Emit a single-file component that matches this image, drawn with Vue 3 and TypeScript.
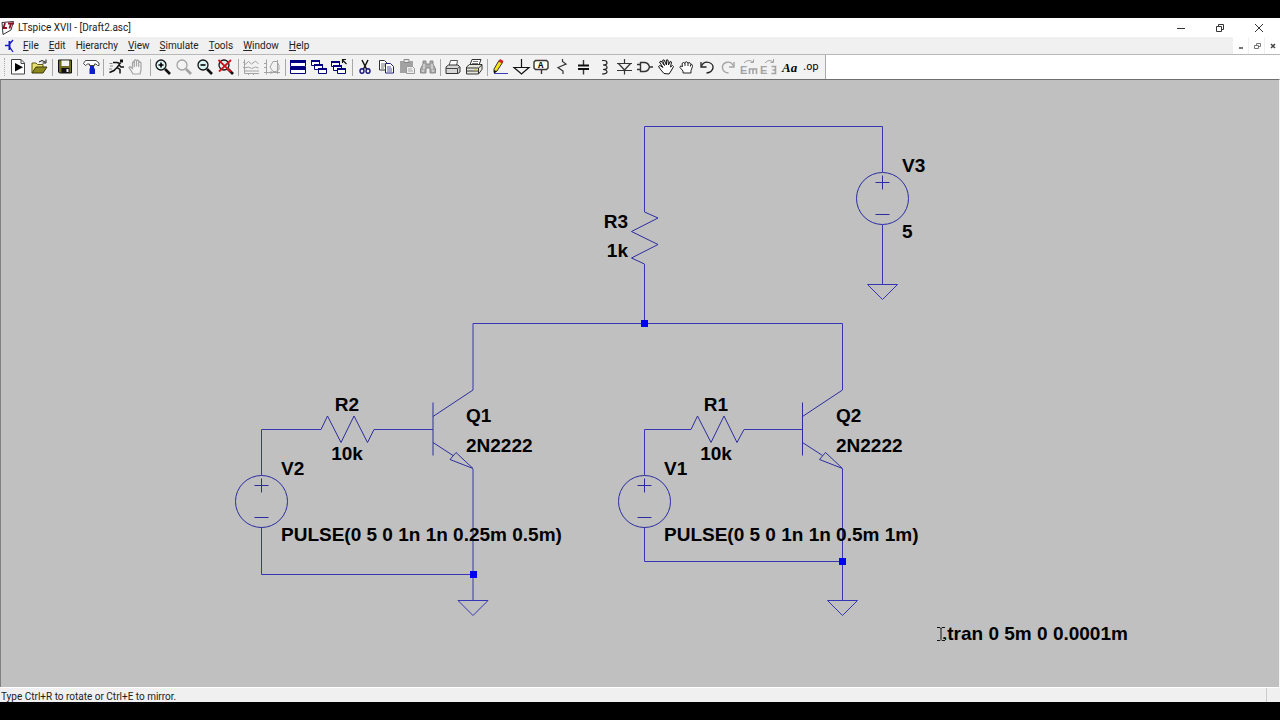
<script setup lang="ts">
import { ref } from 'vue'

interface Shape {
  d?: string
  f?: string
  s?: string
  w?: number
  t?: string
  x?: number
  y?: number
  c?: string
}
interface Tool {
  name: string
  shapes: Shape[]
  off?: boolean
}

const K = '#111'
const G = '#a3a3a3'
const N = '#000080'

const lens = (c: string, inner: string): Shape[] => [
  { d: 'M11 11L16 16', s: c, w: 2.6 },
  { d: 'M2 7a5 5 0 1 0 10 0a5 5 0 1 0 -10 0', f: inner, s: c, w: 1.3 },
]
const win = (x: number, y: number): Shape[] => [
  { d: `M${x + 0.5} ${y + 0.5}h8v5h-8z`, f: '#fff', s: N, w: 1 },
  { d: `M${x} ${y + 1}h9`, s: N, w: 2 },
]
const hand =
  'M5 16L3 12.5 1 9.5 2 8.5 4.5 10.5V4.5L5.3 3.8 6.3 4.5V9V2.5L7.3 1.7 8.5 2.5V8.5V2.8L9.5 2 10.7 2.8V9V4.5L11.8 3.7 13 4.7V12L12 16z'
const fist =
  'M6 15V13L3 9.5 3.5 8 5.5 8.5 5 5.5 6.5 4.5 8 5.5V4.5L9.5 3.8 11 5 12.5 4.5 13.5 6 15 6.5 15.5 8.5 14 12.5V15z M8 5.5V8M11 5V8M13.5 6.5V8.5'

const groups: Tool[][] = [
  [
    { name: 'Run simulation', shapes: [{ d: 'M2.500 1.500h9.500l3.500 3.500V16H2.500z', f: '#fff', s: '#444', w: 1 }, { d: 'M12 1.500v4h4', s: '#444', w: 1 }, { d: 'M6 5L14 9.200 6 13.500z', f: '#000' }] },
    { name: 'Open', shapes: [{ d: 'M2 15V5h4l1.500 1.500H13V9', f: '#e8df70', s: '#5d5a16', w: 1 }, { d: 'M2 15L6 9h11l-4 6z', f: '#8c881d', s: '#3c3a0d', w: 1 }, { d: 'M9 4q3-3 6 0M16 1.500v3.500h-3.500', s: K, w: 1 }] },
  ],
  [
    { name: 'Save', shapes: [{ d: 'M2.500 2h13v13H3.500l-1-1z', f: '#6f6d20', s: '#111', w: 1 }, { d: 'M5.500 2.500h7.500v5.500H5.500z', f: '#f4f4f4' }, { d: 'M5.500 10h8v5h-8z', f: '#111' }, { d: 'M10.500 11h2v3h-2z', f: '#eee' }] },
  ],
  [
    { name: 'Control panel', shapes: [{ d: 'M8 6.500h4v4h1V16H7.500v-5.500H8z', f: '#0b20d0' }, { d: 'M1.500 5.500L3.500 2.500H14l3 2.500v2.500h-1.500L14 6h-1.500v1.500h-5V6H5.500L3.500 7.500z', f: '#fff', s: '#444', w: 1 }] },
  ],
  [
    { name: 'Run', shapes: [{ d: 'M12 1.500h3v3h-3z', f: K }, { d: 'M5 4.500h4l3 1-3 4 3 2v4M9 9.500L6 12.500 1.500 14.500M11 7l2 2h3', s: K, w: 1.5 }, { d: 'M2 8h3M1.500 5.500h3M1 11h3', s: '#888', w: 1 }] },
    { name: 'Halt', off: true, shapes: [{ d: hand, f: '#f5f5f5', s: G, w: 1.2 }] },
  ],
  [
    { name: 'Zoom in', shapes: [...lens(K, '#d8f4f2'), { d: 'M4.500 7h5M7 4.500v5', s: '#000', w: 1.6 }] },
    { name: 'Pan', off: true, shapes: lens(G, '#f4f4f4') },
    { name: 'Zoom out', shapes: [...lens(K, '#d8f4f2'), { d: 'M4.500 7h5', s: '#000', w: 1.6 }] },
    { name: 'Zoom to fit', shapes: [...lens(K, '#d8f4f2'), { d: 'M1.500 2L14 14M14 2L2 13.500', s: '#d3141c', w: 1.8 }] },
  ],
  [
    { name: 'Autorange', off: true, shapes: [{ d: 'M2.500 1.500v14H17M2.500 7l4-3.500 3 2.500 4-3 3 3M2.500 10l4-1 3 1.500 4-1.500 3 1M3 13h14M1 4.500h2M1 9.500h2M6.500 15v2M11.500 15v2', s: G, w: 1 }] },
    { name: 'Plot settings', off: true, shapes: [{ d: 'M3.500 1.500v15M1 14.500h16M1 5.500h3M1 9.500h3M7 9l3-5.500h4l2 4v4l-3 2h-3zM14.500 2v14M8 13v3', s: G, w: 1 }] },
  ],
  [
    { name: 'Tile windows', shapes: [{ d: 'M1.500 2.500h15v6h-15zM1.500 9.500h15v6h-15z', f: '#fff', s: N, w: 1 }, { d: 'M1 3.500h16M1 10.500h16', s: N, w: 3 }] },
    { name: 'Cascade windows', shapes: [...win(1, 2), ...win(4, 6), ...win(8, 10)] },
    { name: 'Close windows', shapes: [...win(1, 3), ...win(3, 7), ...win(7, 10), { d: 'M16.500 6L12.500 2M12.500 5V1.500H16', s: K, w: 1.2 }] },
  ],
  [
    { name: 'Cut', shapes: [{ d: 'M6 2l4.500 9M12 2L7.500 11', s: K, w: 1.5 }, { d: 'M4 13a2 2.300 0 1 0 4 0a2 2.300 0 1 0 -4 0M10 13a2 2.300 0 1 0 4 0a2 2.300 0 1 0 -4 0', s: '#15157c', w: 1.4 }] },
    { name: 'Copy', shapes: [{ d: 'M2.500 2.500h5l2.500 2.500v7H2.500z', f: '#fff', s: '#333', w: 1 }, { d: 'M4 6h4M4 8h4M4 10h3', s: '#777', w: 1 }, { d: 'M8.500 5.500h5l3 3v6.500h-8z', f: '#fff', s: '#1f1f76', w: 1 }, { d: 'M10 9h4M10 11h5M10 13h5', s: '#5555a0', w: 1 }] },
    { name: 'Paste', off: true, shapes: [{ d: 'M2 3h13v12H2z', f: '#a2a2a2' }, { d: 'M6 1.500h5v3H6z', f: '#e5e5e5', s: '#888', w: 1 }, { d: 'M8.500 8.500h6l2 2v5h-8z', f: '#eee', s: '#999', w: 1 }, { d: 'M10 11h4M10 13h5', s: '#aaa', w: 1 }] },
    { name: 'Find', off: true, shapes: [{ d: 'M4 3h3v3h4V3h3v3l2.500 5v4H11v-5H7v5H1.500v-4L4 6z', f: '#aaa', s: '#888', w: 1 }, { d: 'M5 6v5M13 6v5M3 13h2M13 13h2', s: '#eee', w: 1 }] },
  ],
  [
    { name: 'Print', shapes: [{ d: 'M5 8L6.500 2.500h7L12.500 8', f: '#fff', s: '#555', w: 1 }, { d: 'M2 9l2.500-2H14l2 2v5l-2 1.500H2z', f: '#d6d6d6', s: '#333', w: 1 }, { d: 'M2 10.500h11.500M13.500 10.500L16 8.500M13.500 10.500V15', s: '#444', w: 1 }] },
    { name: 'Print preview', shapes: [{ d: 'M5 7l2-5.500h9L14 7', f: '#fff', s: '#333', w: 1 }, { d: 'M8 3.500h5M7 5.500h6', s: '#777', w: 1 }, { d: 'M1.500 9l3-2.500H17v5L13.500 16h-12z', f: '#e6e6dc', s: '#333', w: 1 }, { d: 'M1.500 10h12L17 7M13.500 10v6M2 13h11', s: '#333', w: 1 }, { d: 'M9 12h3', s: '#c9be2a', w: 1 }] },
  ],
  [
    { name: 'Wire', shapes: [{ d: 'M3 11L8 2.500l3.500 2L6 13l-3 1.500z', f: '#f3e21c', s: '#333', w: 1 }, { d: 'M7.500 3.500L9 1l3.500 2L11 5.500z', f: '#d32222' }, { d: 'M3 12v3.500l3-2z', f: '#111' }, { d: 'M3 15.500h14', s: '#3a3ab8', w: 1 }] },
    { name: 'Ground', shapes: [{ d: 'M9.500 1v8.500M2 9.500h15L9.500 16z', s: K, w: 1.2 }] },
    { name: 'Label net', shapes: [{ d: 'M3.500 2.500h11l1.500 1.500v6l-1.500 1.500h-11L2 10V4zM9.500 11.500V16', f: '#fffff0', s: '#333', w: 1.4 }, { t: 'A', x: 6, y: 10, c: 'mono' }] },
    { name: 'Resistor', shapes: [{ d: 'M9.500 1v2.500L13 6 5 9.500 10 13v3', s: '#333', w: 1.2 }] },
    { name: 'Capacitor', shapes: [{ d: 'M9.500 2v5.500M9.500 11v5.500', s: '#333', w: 1.4 }, { d: 'M4 7.500h11M4 11h11', s: K, w: 1.8 }] },
    { name: 'Inductor', shapes: [{ d: 'M7 2.500h2Q12 2.500 12 5Q12 7 8 7Q12 7 12 9.500Q12 11.500 8 11.500Q12 11.500 12 14Q11.500 16 7 16', s: '#222', w: 1.2 }] },
    { name: 'Diode', shapes: [{ d: 'M9.500 1v4.500M3.500 5.500h12L9.500 12zM2 5.500h15M2 12.500h15M9.500 12v4.500', s: '#333', w: 1.2 }] },
    { name: 'Component', shapes: [{ d: 'M4.500 4.500H9Q12.500 5 13.500 9Q12.500 13 9 13.500H4.500zM1 6.500h3.500M1 11.500h3.500M13.500 9H17', s: '#333', w: 1.4 }] },
    { name: 'Move', shapes: [{ d: 'M7 15.500L4 12 1.500 8.500 3 7.500 6 9.500 2.500 4 4 3 7.500 7.500 5.500 2.500 7 1.800 9.500 7 9.300 2 11 2 11.500 7 13 3.500 14.500 4 13.500 9 15.500 7.500 16.500 8.500 14 13 12 16z', f: '#fff', s: K, w: 1 }] },
    { name: 'Drag', shapes: [{ d: fist, f: '#fff', s: '#222', w: 1 }] },
    { name: 'Undo', shapes: [{ d: 'M3.500 8Q6 3 11 4.500Q15.500 6 15 10Q14 14.500 8.500 15', s: '#222', w: 1.3 }, { d: 'M3 4v5h5.500', s: '#222', w: 1.3 }] },
    { name: 'Redo', off: true, shapes: [{ d: 'M14.500 8Q12 3 7 4.500Q3 6 3.500 10Q4 14.500 9.500 15', s: G, w: 1.4 }, { d: 'M15 4v5h-5', s: G, w: 1.4 }] },
    { name: 'Rotate', off: true, shapes: [{ t: 'E', x: 0, y: 16, c: 'letter' }, { d: 'M9.500 16v-5h7v5M13 11v5', s: G, w: 1.6 }, { d: 'M4 5Q8 .5 13 4M13.500 1.500v3h-3', s: G, w: 1 }] },
    { name: 'Mirror', off: true, shapes: [{ t: 'E', x: 0, y: 16, c: 'letter' }, { d: 'M11.500 8.500h4v7h-4M12.500 12h3', s: G, w: 1.6 }, { d: 'M5 5Q9 .5 13 4M13.500 1v3.500h-3', s: G, w: 1 }] },
    { name: 'Text', shapes: [{ t: 'Aa', x: 1, y: 14, c: 'script' }] },
    { name: 'SPICE directive', shapes: [{ t: '.op', x: 1, y: 12, c: 'op' }] },
  ],
]

const menus = [
  ['', 'F', 'ile'],
  ['', 'E', 'dit'],
  ['H', 'i', 'erarchy'],
  ['', 'V', 'iew'],
  ['', 'S', 'imulate'],
  ['', 'T', 'ools'],
  ['', 'W', 'indow'],
  ['', 'H', 'elp'],
]

const sources = [
  { x: 261.5, y: 501.5 },
  { x: 644.5, y: 501.5 },
  { x: 882.5, y: 198.5 },
]
const grounds = [
  { x: 473, y: 600.5 },
  { x: 842.5, y: 600.5 },
  { x: 882.5, y: 284.5 },
]
const transistors = [
  { x: 473, y: 429.5 },
  { x: 842.5, y: 429.5 },
]
const wires = [
  'M644.5 212V126.5H882.5V172',
  'M644.5 264V323.5',
  'M473 390V323.5H842.5V390',
  'M261.5 475V429.5H321M374 429.5H433',
  'M644.5 475V429.5H691M744 429.5H803',
  'M261.5 527V574.5H473',
  'M644.5 527V561.5H842.5',
  'M473 469V600.5',
  'M842.5 469V600.5',
  'M882.5 225V284.5',
]
const joints = [
  { x: 645, y: 324 },
  { x: 474, y: 575 },
  { x: 843, y: 562 },
]
const labels = [
  { t: 'R3', x: 628, y: 228, a: 'end' },
  { t: '1k', x: 628, y: 257, a: 'end' },
  { t: 'V3', x: 902, y: 172, a: 'start' },
  { t: '5', x: 902, y: 238, a: 'start' },
  { t: 'R2', x: 347, y: 411, a: 'middle' },
  { t: '10k', x: 347, y: 460, a: 'middle' },
  { t: 'Q1', x: 466, y: 422, a: 'start' },
  { t: '2N2222', x: 466, y: 452, a: 'start' },
  { t: 'V2', x: 281, y: 475, a: 'start' },
  { t: 'PULSE(0 5 0 1n 1n 0.25m 0.5m)', x: 281, y: 541, a: 'start' },
  { t: 'R1', x: 716, y: 411, a: 'middle' },
  { t: '10k', x: 716, y: 460, a: 'middle' },
  { t: 'Q2', x: 836, y: 422, a: 'start' },
  { t: '2N2222', x: 836, y: 452, a: 'start' },
  { t: 'V1', x: 664, y: 475, a: 'start' },
  { t: 'PULSE(0 5 0 1n 1n 0.5m 1m)', x: 664, y: 541, a: 'start' },
  { t: '.tran 0 5m 0 0.0001m', x: 942, y: 640, a: 'start' },
]
const status = ref('Type Ctrl+R to rotate or Ctrl+E to mirror.')
</script>

<template>
  <div class="screen">
    <header class="title">
      <svg class="logo" width="16" height="16" viewBox="0 0 16 16" aria-hidden="true">
        <path d="M2 2.500L13.500 1.500 11 10 3 14.500z" fill="#fff" stroke="#333" />
        <path d="M5 3L3.500 8H7M8 3.500h6M11 3.500L9.500 8.500" fill="none" stroke="#8f1022" stroke-width="1.8" />
      </svg>
      <h1>LTspice XVII - [Draft2.asc]</h1>
      <div class="caption">
        <button aria-label="Minimize"><svg width="10" height="10"><path d="M1 5.500h8" /></svg></button>
        <button aria-label="Restore"><svg width="10" height="10"><path d="M1.500 3.500h5v5h-5zM3.500 3V1.500h5v5H7" /></svg></button>
        <button aria-label="Close"><svg width="10" height="10"><path d="M1 1l8 8M9 1l-8 8" /></svg></button>
      </div>
    </header>

    <nav class="menu">
      <svg class="doc" width="12" height="16" viewBox="0 0 12 16" aria-hidden="true">
        <path d="M1 7.500h4" stroke="#1818c8" stroke-width="1.500" />
        <path d="M5.500 3v9" stroke="#1818c8" stroke-width="2" />
        <path d="M6 5.500L9 2M6 9.500l3 4.500" fill="none" stroke="#1818c8" stroke-width="1.300" />
      </svg>
      <button v-for="m in menus" :key="m.join('')" class="item">{{ m[0] }}<u>{{ m[1] }}</u>{{ m[2] }}</button>
      <div class="mdi">
        <button aria-label="Minimize document"><svg width="8" height="8"><path d="M2 6h4" /></svg></button>
        <button aria-label="Restore document"><svg width="8" height="8"><path class="thin" d="M1.500 3.500h4v3h-4zM3.500 3V1.500h4v3H6" /></svg></button>
        <button aria-label="Close document"><svg width="8" height="8"><path d="M2 2l4 4M6 2L2 6" /></svg></button>
      </div>
    </nav>

    <div class="toolrow">
      <div class="toolbar" role="toolbar" aria-label="Main">
        <template v-for="(g, gi) in groups" :key="gi">
          <span v-if="gi > 0" class="sep"></span>
          <button v-for="b in g" :key="b.name" class="tool" :aria-label="b.name" :disabled="b.off">
            <svg width="18" height="18" viewBox="0 0 18 18">
              <template v-for="(s, i) in b.shapes" :key="i">
                <text v-if="s.t" :x="s.x" :y="s.y" :class="s.c">{{ s.t }}</text>
                <path v-else :d="s.d" :fill="s.f ?? 'none'" :stroke="s.s ?? 'none'" :stroke-width="s.w" />
              </template>
            </svg>
          </button>
        </template>
      </div>
    </div>

    <main class="sheet">
      <svg class="schematic" viewBox="1 80 1278 607" role="img" aria-label="Schematic">
        <g class="wire">
          <path v-for="d in wires" :key="d" :d="d" />
          <path v-for="g in grounds" :key="g.x" :d="`M${g.x - 15} ${g.y}h30l-15 15z`" />
        </g>
        <g class="part">
          <path d="M644.5 212L658 218 631.5 231.500 658 244.500 631.500 258 644.500 264" />
          <path d="M321 429.500L327.500 416 341 442.500 354 416 367.500 442.500 374 429.500" />
          <path d="M691 429.500L697.500 416 711 442.500 724 416 737 442.500 744 429.500" />
          <g v-for="s in sources" :key="s.x">
            <circle :cx="s.x" :cy="s.y" r="26" />
            <path :d="`M${s.x - 7} ${s.y - 16}h14M${s.x} ${s.y - 23}v14M${s.x - 7} ${s.y + 16}h14`" />
          </g>
          <path
            v-for="q in transistors"
            :key="q.x"
            :d="`M${q.x - 40} ${q.y - 27}v53M${q.x - 40} ${q.y - 13}l40 -26.500M${q.x - 40} ${q.y + 13}l20 13M${q.x} ${q.y + 39}l-23 -9l6 -7z`"
          />
        </g>
        <rect v-for="j in joints" :key="j.x" class="joint" :x="j.x - 4" :y="j.y - 4" width="7" height="7" />
        <text v-for="l in labels" :key="l.t + l.x" class="label" :x="l.x" :y="l.y" :text-anchor="l.a">{{ l.t }}</text>
        <path class="ibeam-edge" d="M937 627.500h3l1 1 1-1h3M941 628v11M937 640.500h3l1-1 1 1h3" />
        <path class="ibeam" d="M937 627.500h3l1 1 1-1h3M941 628v11M937 640.500h3l1-1 1 1h3" />
      </svg>
    </main>

    <footer class="status">
      <span>{{ status }}</span>
      <i class="grip"></i>
    </footer>
  </div>
</template>

<style>
body {
  margin: 0;
  background: #000;
}
</style>

<style scoped>
.screen {
  box-sizing: border-box;
  height: 100vh;
  padding: 18px 0;
  display: flex;
  flex-direction: column;
  background: #000;
  color: #222;
  font: 10px/12px Roboto, "Noto Sans", sans-serif;
}
button {
  padding: 0;
  border: 0;
  background: none;
  color: inherit;
  font: inherit;
}
svg {
  display: block;
}
.title {
  flex: none;
  height: 19px;
  display: flex;
  align-items: center;
  background: #fff;
}
.logo {
  margin-right: 2px;
}
.title h1 {
  margin: 0;
  font-size: 10px;
  font-weight: 400;
}
.caption {
  margin-left: auto;
  padding-right: 2px;
  display: flex;
}
.caption button {
  width: 39px;
  height: 19px;
  display: grid;
  place-items: center;
}
.caption path {
  fill: none;
  stroke: #333;
}
.menu {
  flex: none;
  height: 17px;
  padding-left: 4px;
  display: flex;
  align-items: center;
  background: #f0f0f0;
  border-bottom: 1px solid #b8b8b8;
}
.doc {
  margin-right: 7px;
}
.item {
  margin-right: 10px;
}
u {
  text-underline-offset: 1px;
}
.mdi {
  margin-left: auto;
  display: flex;
  gap: 1px;
}
.mdi button {
  width: 15px;
  height: 17px;
  display: grid;
  place-items: center;
  background: #fff;
}
.mdi path {
  fill: none;
  stroke: #444;
  stroke-width: 1.5;
}
.mdi .thin {
  stroke: #777;
  stroke-width: 1;
}
.toolrow {
  flex: none;
  display: flex;
  height: 24px;
  background: #fff;
}
.toolbar {
  box-sizing: border-box;
  width: 826px;
  padding: 0 4px;
  display: flex;
  align-items: center;
  background: #f2f2f2;
  border-right: 1px solid #aaa;
}
.toolbar::before {
  content: "";
  width: 1px;
  height: 18px;
  margin-right: 2px;
  border-left: 1px dotted #aaa;
}
.tool {
  flex: 4;
  min-width: 0;
  display: flex;
  justify-content: center;
}
.tool svg {
  flex: none;
  overflow: visible;
}
.sep {
  flex: 1;
  display: flex;
  justify-content: center;
}
.sep::before {
  content: "";
  width: 1px;
  height: 17px;
  background: #a8a8a8;
}
.mono {
  font: bold 9px "Liberation Mono", monospace;
}
.letter {
  font: bold 11px "Liberation Sans", sans-serif;
  fill: #a3a3a3;
}
.script {
  font: italic bold 13px "Liberation Serif", serif;
}
.op {
  font: 10px "DejaVu Sans", sans-serif;
}
.sheet {
  flex: 1;
  min-height: 0;
  background: #c0c0c0;
  border-top: 1px solid #6e6e6e;
  border-left: 1px solid #808080;
  border-right: 1px solid #f4f4f4;
}
.schematic {
  width: 100%;
  height: 100%;
}
.wire {
  fill: none;
  stroke: #3636b4;
}
.part {
  fill: none;
  stroke: #2c2ca0;
}
.joint {
  fill: #0000f0;
}
.label {
  font: bold 19px "Liberation Sans", Arial, sans-serif;
  fill: #000;
}
.ibeam {
  fill: none;
  stroke: #111;
}
.ibeam-edge {
  fill: none;
  stroke: #c0c0c0;
  stroke-width: 3;
}
.status {
  flex: none;
  box-sizing: border-box;
  height: 15px;
  padding-left: 1px;
  display: flex;
  align-items: flex-end;
  justify-content: space-between;
  background: #f0f0f0;
  border-top: 1px solid #fff;
  line-height: 10px;
}
.grip {
  width: 13px;
  height: 14px;
  border-left: 1px solid #ccc;
}
</style>
